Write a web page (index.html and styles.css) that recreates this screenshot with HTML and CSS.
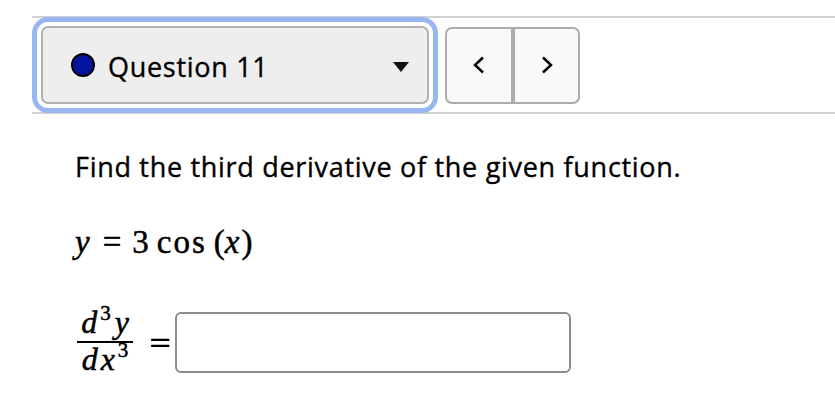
FILE: index.html
```html
<!DOCTYPE html>
<html lang="en">
<head>
<meta charset="utf-8">
<title>Question 11</title>
<link rel="stylesheet" href="styles.css">
</head>
<body>
<div class="toolbar">
  <button class="qselect" type="button">
    <span class="dot"></span>
    <span class="qlabel">Question 11</span>
    <span class="caret"></span>
  </button>
  <div class="nav">
    <button class="navbtn prev" type="button" aria-label="Previous">
      <svg width="14" height="18" viewBox="0 0 14 18"><polyline points="11,1.5 3,9 11,16.5" fill="none" stroke="#000" stroke-width="2.5"/></svg>
    </button>
    <button class="navbtn next" type="button" aria-label="Next">
      <svg width="14" height="18" viewBox="0 0 14 18"><polyline points="3,1.5 11,9 3,16.5" fill="none" stroke="#000" stroke-width="2.5"/></svg>
    </button>
  </div>
</div>
<div class="content">
  <p class="prompt">Find the third derivative of the given function.</p>
  <div class="eq">
    <span class="mi">y</span><span class="rel">=</span><span class="num">3</span><span class="op">cos</span><span class="paren">(</span><span class="mi mx">x</span><span class="paren">)</span>
  </div>
  <div class="answer">
    <span class="frac">
      <span class="fnum"><span class="mi">d</span><sup class="sup">3</sup><span class="mi">y</span></span>
      <span class="fden"><span class="mi">d</span><span class="mi dx">x</span><sup class="sup">3</sup></span>
    </span>
    <span class="rel2">=</span>
    <input class="ans" type="text" aria-label="answer">
  </div>
</div>
</body>
</html>
```
FILE: styles.css
```css
html, body {
  margin: 0;
  padding: 0;
  background: #fff;
}
body {
  font-family: "Open Sans", "Liberation Sans", sans-serif;
  color: #000;
  width: 835px;
  height: 404px;
  overflow: hidden;
}
.toolbar {
  margin: 16px 0 0 32px;
  border-top: 2px solid #d2d2d2;
  border-bottom: 2px solid #d2d2d2;
  padding: 8px 0 8px 9px;
  display: flex;
  align-items: center;
}
.qselect {
  box-sizing: border-box;
  width: 388px;
  height: 78px;
  border: 2px solid #b0b0b0;
  border-radius: 7px;
  background: #eeeeee;
  outline: 5px solid #98b6f1;
  outline-offset: 4px;
  display: flex;
  align-items: center;
  padding: 0 18px 0 28px;
  margin: 0;
  font-family: inherit;
  cursor: pointer;
}
.dot {
  box-sizing: border-box;
  width: 24px;
  height: 24px;
  border-radius: 50%;
  border: 2px solid #000;
  background: #0514a0;
  flex: none;
}
.qlabel {
  margin-left: 13px;
  font-size: 27px;
  font-weight: 400;
  letter-spacing: 0.7px;
  -webkit-text-stroke: 0.35px #000;
  color: #000;
  padding-top: 2px;
  flex: 1;
  text-align: left;
}
.caret {
  width: 0;
  height: 0;
  border-left: 8px solid transparent;
  border-right: 8px solid transparent;
  border-top: 10px solid #111;
  margin-top: 4px;
}
.nav {
  display: flex;
  margin-left: 16px;
}
.navbtn {
  box-sizing: border-box;
  height: 77px;
  border: 2px solid #acacac;
  background: #f9f9f9;
  margin: 0;
  padding: 0;
  display: flex;
  align-items: center;
  justify-content: center;
  cursor: pointer;
}
.prev {
  width: 68px;
  border-radius: 7px 0 0 7px;
}
.next {
  width: 67px;
  border-radius: 0 7px 7px 0;
}
.content {
  padding-left: 75px;
}
.prompt {
  margin: 35px 0 0 0;
  font-size: 27px;
  font-weight: 400;
  letter-spacing: 0.7px;
  -webkit-text-stroke: 0.35px #000;
  line-height: 36px;
}
.eq {
  margin-top: 37px;
  font-family: "Liberation Serif", "DejaVu Serif", serif;
  font-size: 33px;
  line-height: 40px;
  display: flex;
  align-items: baseline;
  -webkit-text-stroke: 0.5px #000;
}
.mi {
  font-style: italic;
}
.rel {
  margin: 0 11px 0 13px;
}
.num {
  margin-right: 8px;
}
.op {
  letter-spacing: 2px;
  margin-right: 7px;
}
.mx {
  margin: 0 2px 0 0;
}
.answer {
  margin-top: 44px;
  display: flex;
  align-items: center;
  font-family: "Liberation Serif", "DejaVu Serif", serif;
  -webkit-text-stroke: 0.5px #000;
}
.frac {
  display: inline-flex;
  flex-direction: column;
  align-items: stretch;
  width: 56px;
  font-size: 32px;
  margin-left: 2px;
}
.fnum {
  line-height: 32px;
  padding: 0 0 3px;
  display: flex;
  justify-content: center;
  align-items: baseline;
}
.fden {
  line-height: 32px;
  border-top: 2px solid #000;
  padding: 0 0 3px;
  display: flex;
  justify-content: center;
  align-items: baseline;
}
.sup {
  font-size: 21px;
  position: relative;
  top: -13px;
  line-height: 0;
  margin: 0 4px 0 3px;
}
.fden .sup {
  margin: 0 0 0 3px;
}
.dx {
  margin-left: 3px;
}
.rel2 {
  font-family: "DejaVu Serif", serif;
  font-size: 29px;
  margin: 0 3px 0 15px;
  -webkit-text-stroke: 0;
}
.ans {
  box-sizing: border-box;
  width: 396px;
  height: 61px;
  border: 2px solid #8c8c8c;
  border-radius: 6px;
  background: #fff;
  margin: 0;
  padding: 0 8px;
  font-size: 20px;
  outline: none;
}
```
